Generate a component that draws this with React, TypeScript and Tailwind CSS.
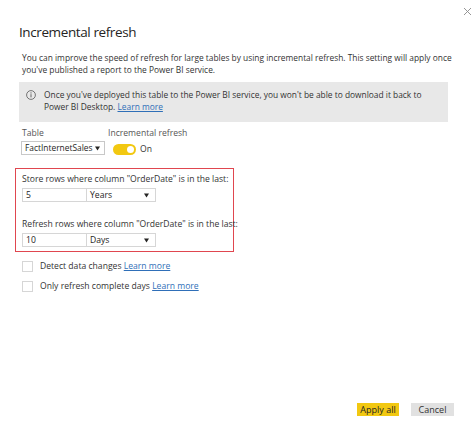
import React from "react";

const Caret = () => (
  <svg width="5" height="5" viewBox="0 0 5 5" className="shrink-0">
    <path d="M0 0.5 L5 0.5 L2.5 4.5 Z" fill="#252423" />
  </svg>
);

const Checkbox = ({ label }: { label: string }) => (
  <div className="flex items-center">
    <div className="w-[11px] h-[11px] border border-[#d6d6d6] bg-white" />
    <span className="ml-[7px] text-[8.6px] leading-[12px] text-[#333] whitespace-nowrap">
      {label}{" "}
      <span className="text-[#2f6fb8] underline">Learn more</span>
    </span>
  </div>
);

export default function App() {
  return (
    <div
      className="relative w-[474px] h-[439px] bg-white flex flex-col text-[#333]"
      style={{ fontFamily: '"Open Sans", "Noto Sans", sans-serif' }}
    >
      <div className="absolute right-[2px] top-[7px] w-[9px] h-[9px]">
        <svg width="9" height="9" viewBox="0 0 9 9">
          <path d="M1 1 L8 8 M8 1 L1 8" stroke="#8a8a8a" strokeWidth="0.9" />
        </svg>
      </div>

      <div className="pl-[19px] pr-[26px]">
        <div className="mt-[22px] text-[13.5px] tracking-[-0.4px] leading-[20px] text-[#252423] whitespace-nowrap">
          Incremental refresh
        </div>
        <div className="mt-[10px] pl-[3px] text-[8.4px] leading-[12px] text-[#333] whitespace-nowrap">
          You can improve the speed of refresh for large tables by using incremental refresh. This setting will apply once
          <br />
          you've published a report to the Power BI service.
        </div>

        <div className="mt-[6px] w-[429px] h-[40px] bg-[#e8e8e8] flex pl-[7px] pt-[7px]">
          <svg width="10" height="10" viewBox="0 0 10 10" className="mt-[1px] shrink-0">
            <circle cx="5" cy="5" r="4.4" fill="none" stroke="#555" strokeWidth="0.8" />
            <path d="M5 4.2 V7.4" stroke="#555" strokeWidth="0.9" />
            <circle cx="5" cy="2.9" r="0.55" fill="#555" />
          </svg>
          <div className="ml-[8px] text-[8.4px] leading-[12px] text-[#333] whitespace-nowrap">
            Once you've deployed this table to the Power BI service, you won't be able to download it back to
            <br />
            Power BI Desktop. <span className="text-[#2f6fb8] underline">Learn more</span>
          </div>
        </div>

        <div className="mt-[5px] pl-[3px] flex">
          <div className="flex flex-col">
            <span className="text-[8.6px] leading-[12px] text-[#555]">Table</span>
            <div className="mt-[2px] ml-[-1px] w-[84px] h-[14px] border border-[#c8c8c8] flex items-center justify-between pl-[3px] pr-[4px]">
              <span className="text-[8.4px] leading-[12px] text-[#252423] whitespace-nowrap">FactInternetSales</span>
              <Caret />
            </div>
          </div>
          <div className="flex flex-col ml-[3px]">
            <span className="text-[8.6px] leading-[12px] text-[#555] whitespace-nowrap">Incremental refresh</span>
            <div className="mt-[4px] ml-[5px] flex items-center">
              <div className="w-[23px] h-[11px] rounded-full bg-[#f2c811] flex items-center justify-end pr-[2px]">
                <div className="w-[7px] h-[7px] rounded-full bg-white" />
              </div>
              <span className="ml-[4px] text-[8.6px] leading-[12px] text-[#333]">On</span>
            </div>
          </div>
        </div>

        <div className="mt-[13px] ml-[-4px] w-[219px] border border-[#e0464f] pl-[6px] pt-[4px] pb-[4px]">
          <div className="text-[8.6px] leading-[12px] text-[#333] whitespace-nowrap">
            Store rows where column "OrderDate" is in the last:
          </div>
          <div className="mt-[3px] flex">
            <div className="w-[65px] h-[14px] border border-[#d6d6d6] flex items-center pl-[3px] text-[8.6px] text-[#252423]">5</div>
            <div className="w-[69px] h-[14px] border border-[#d6d6d6] border-l-0 flex items-center justify-between pl-[3px] pr-[6px] text-[8.6px] text-[#252423]">
              Years <Caret />
            </div>
          </div>
          <div className="mt-[16px] text-[8.6px] leading-[12px] text-[#333] whitespace-nowrap">
            Refresh rows where column "OrderDate" is in the last:
          </div>
          <div className="mt-[3px] flex">
            <div className="w-[65px] h-[14px] border border-[#d6d6d6] flex items-center pl-[3px] text-[8.6px] text-[#252423]">10</div>
            <div className="w-[69px] h-[14px] border border-[#d6d6d6] border-l-0 flex items-center justify-between pl-[3px] pr-[6px] text-[8.6px] text-[#252423]">
              Days <Caret />
            </div>
          </div>
        </div>

        <div className="mt-[8px] pl-[3px] flex flex-col gap-[8px]">
          <Checkbox label="Detect data changes" />
          <Checkbox label="Only refresh complete days" />
        </div>
      </div>

      <div className="flex-1" />
      <div className="flex justify-end gap-[12px] pr-[20px] mb-[23px]">
        <div className="w-[42px] h-[13px] bg-[#f2c811] flex items-center justify-center text-[9px] text-[#252423] whitespace-nowrap">
          Apply all
        </div>
        <div className="w-[43px] h-[13px] bg-[#e1e1e1] flex items-center justify-center text-[9px] text-[#333] whitespace-nowrap">
          Cancel
        </div>
      </div>
    </div>
  );
}
